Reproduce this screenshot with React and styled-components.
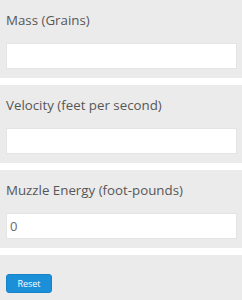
import React from 'react';
import styled, { createGlobalStyle } from 'styled-components';

const GlobalStyle = createGlobalStyle`
  html, body {
    margin: 0;
    padding: 0;
    background: #ffffff;
  }
  body {
    font-family: 'Open Sans', 'Liberation Sans', sans-serif;
  }
`;

const fields = [
  { label: 'Mass (Grains)', value: '' },
  { label: 'Velocity (feet per second)', value: '' },
  { label: 'Muzzle Energy (foot-pounds)', value: '0' },
];

export default function App() {
  return (
    <>
      <GlobalStyle />
      <Form>
        {fields.map((f) => (
          <Section key={f.label}>
            <Label>{f.label}</Label>
            <Input type="text" defaultValue={f.value} />
          </Section>
        ))}
        <Footer>
          <ResetButton type="button">Reset</ResetButton>
        </Footer>
      </Form>
    </>
  );
}

const Form = styled.div`
  display: flex;
  flex-direction: column;
  gap: 7px;
  width: 242px;
  height: 300px;
  overflow: hidden;
  background: #ffffff;
`;

const Section = styled.div`
  display: flex;
  flex-direction: column;
  padding: 10px 5px 9px 6px;
  background: #ebebeb;
`;

const Label = styled.div`
  font-size: 13.3px;
  line-height: 20px;
  color: #575757;
  margin-bottom: 13px;
`;

const Input = styled.input`
  box-sizing: border-box;
  height: 26px;
  width: 100%;
  border: 1px solid #e4e4e4;
  background: #ffffff;
  padding: 0 3px;
  font-family: 'Open Sans', 'Liberation Sans', sans-serif;
  font-size: 13px;
  color: #6a6a6a;
  outline: none;
`;

const Footer = styled.div`
  flex: 1;
  padding: 15px 6px 0;
  background: #ebebeb;
`;

const ResetButton = styled.button`
  width: 46px;
  height: 19px;
  padding: 0;
  border: 1px solid #1683c7;
  border-radius: 3px;
  background: #1b8fd8;
  color: #ffffff;
  font-family: 'Open Sans', 'Liberation Sans', sans-serif;
  font-size: 9px;
  line-height: 17px;
  cursor: pointer;
`;
